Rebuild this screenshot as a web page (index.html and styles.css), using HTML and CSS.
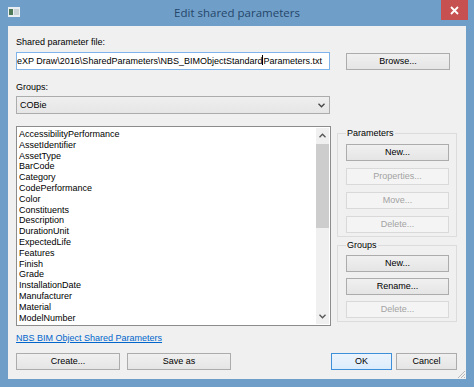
FILE: index.html
```html
<!DOCTYPE html>
<html lang="en">

<head>
    <meta charset="UTF-8">
    <title>Edit shared parameters</title>
    <link rel="stylesheet" href="styles.css">
</head>

<body>
    <div class="window">

        <div class="titlebar">
            <svg class="app_icon" width="12" height="10" viewBox="0 0 12 10">
                <rect x="0" y="0" width="12" height="10" fill="#e8eef2" />
                <rect x="1" y="2" width="4" height="6" fill="#4f7a5a" />
                <rect x="6" y="2" width="5" height="6" fill="#c9d3d8" />
            </svg>
            <div class="title">Edit shared parameters</div>
            <div class="close_btn">
                <svg width="9" height="9" viewBox="0 0 9 9">
                    <path d="M1 1 L8 8 M8 1 L1 8" stroke="#fff" stroke-width="1.8" />
                </svg>
            </div>
        </div>

        <div class="client">
            <div class="label">Shared parameter file:</div>
            <div class="file_row">
                <div class="textbox">
                    <span class="path">ieXP Draw\2016\SharedParameters\NBS_BIMObjectStandard<span class="caret"></span>Parameters.txt</span>
                </div>
                <div class="btn browse">Browse...</div>
            </div>

            <div class="label groups_label">Groups:</div>
            <div class="combo">
                <span>COBie</span>
                <svg width="7" height="5" viewBox="0 0 7 5">
                    <path d="M0.5 0.8 L3.5 3.8 L6.5 0.8" fill="none" stroke="#444" stroke-width="1.3" />
                </svg>
            </div>

            <div class="main">
                <div class="listbox">
                    <div class="items">
                        <div>AccessibilityPerformance</div>
                        <div>AssetIdentifier</div>
                        <div>AssetType</div>
                        <div>BarCode</div>
                        <div>Category</div>
                        <div>CodePerformance</div>
                        <div>Color</div>
                        <div>Constituents</div>
                        <div>Description</div>
                        <div>DurationUnit</div>
                        <div>ExpectedLife</div>
                        <div>Features</div>
                        <div>Finish</div>
                        <div>Grade</div>
                        <div>InstallationDate</div>
                        <div>Manufacturer</div>
                        <div>Material</div>
                        <div>ModelNumber</div>
                    </div>
                    <div class="scrollbar">
                        <svg class="arrow" width="7" height="5" viewBox="0 0 7 5">
                            <path d="M0.5 4.2 L3.5 1.2 L6.5 4.2" fill="none" stroke="#555" stroke-width="1.3" />
                        </svg>
                        <div class="track">
                            <div class="thumb"></div>
                        </div>
                        <svg class="arrow" width="7" height="5" viewBox="0 0 7 5">
                            <path d="M0.5 0.8 L3.5 3.8 L6.5 0.8" fill="none" stroke="#555" stroke-width="1.3" />
                        </svg>
                    </div>
                </div>

                <div class="side">
                    <fieldset class="grp grp_params">
                        <legend>Parameters</legend>
                        <div class="btn">New...</div>
                        <div class="btn disabled">Properties...</div>
                        <div class="btn disabled">Move...</div>
                        <div class="btn disabled">Delete...</div>
                    </fieldset>
                    <fieldset class="grp grp_groups">
                        <legend>Groups</legend>
                        <div class="btn">New...</div>
                        <div class="btn">Rename...</div>
                        <div class="btn disabled">Delete...</div>
                    </fieldset>
                </div>
            </div>

            <a class="link" href="#">NBS BIM Object Shared Parameters</a>

            <div class="footer">
                <div class="btn wide">Create...</div>
                <div class="btn wide">Save as</div>
                <div class="spacer"></div>
                <div class="btn small default">OK</div>
                <div class="btn small">Cancel</div>
            </div>

            <svg class="grip" width="10" height="10" viewBox="0 0 10 10">
                <path d="M9 2 L2 9 M9 5 L5 9 M9 8 L8 9" stroke="#b8b8b8" stroke-width="1" />
            </svg>
        </div>

    </div>
</body>

</html>
```

FILE: styles.css
```css
body {
    margin: 0;
    width: 474px;
    height: 387px;
    overflow: hidden;
    background-color: #6f9fc9;
    font-family: "Liberation Sans", Arial, sans-serif;
    font-size: 9px;
    color: #000;
}

.window {
    display: flex;
    flex-direction: column;
    height: 387px;
}

/* title bar */
.titlebar {
    height: 26px;
    display: grid;
    grid-template-columns: 1fr auto 1fr;
    align-items: start;
}

.app_icon {
    margin: 7px 0 0 8px;
}

.title {
    font-family: "Open Sans", "Liberation Sans", sans-serif;
    font-size: 11.5px;
    line-height: 26px;
    color: #26466a;
}

.close_btn {
    justify-self: end;
    width: 27px;
    height: 20px;
    margin-right: 6px;
    background-color: #c75050;
    display: flex;
    align-items: center;
    justify-content: center;
}

/* client area */
.client {
    position: relative;
    margin: 0 8px;
    height: 353px;
    box-sizing: border-box;
    padding: 10px 9px 0 8px;
    background-color: #f0f0f0;
}

.label {
    height: 12px;
    line-height: 12px;
}

.file_row {
    display: flex;
    align-items: center;
    margin-top: 4px;
}

.textbox {
    width: 314px;
    height: 18px;
    box-sizing: border-box;
    border: 1px solid #7eb4ea;
    background-color: white;
    overflow: hidden;
    white-space: nowrap;
    line-height: 16px;
}

.path {
    margin-left: -2px;
}

.caret {
    display: inline-block;
    width: 1px;
    height: 10px;
    background-color: #000;
    vertical-align: -1px;
}

.browse {
    margin-left: 16px;
    width: 104px;
}

.groups_label {
    margin-top: 11px;
}

.combo {
    margin-top: 3px;
    width: 314px;
    height: 18px;
    box-sizing: border-box;
    border: 1px solid #acacac;
    background: linear-gradient(#efefef, #e6e6e6);
    display: flex;
    align-items: center;
    justify-content: space-between;
    padding: 0 4px 0 3px;
}

/* list + side buttons */
.main {
    display: flex;
    margin-top: 12px;
    height: 200px;
}

.listbox {
    width: 315px;
    height: 200px;
    box-sizing: border-box;
    border: 1px solid #8c8c8c;
    background-color: white;
    display: flex;
}

.items {
    flex: 1;
    padding: 2px 0 0 2px;
    line-height: 10.8px;
    white-space: nowrap;
    overflow: hidden;
}

.scrollbar {
    width: 13px;
    margin: 1px 1px 1px 0;
    background-color: #f0f0f0;
    display: flex;
    flex-direction: column;
    align-items: center;
}

.arrow {
    margin: 5px 0;
}

.track {
    flex: 1;
    width: 100%;
}

.thumb {
    height: 84px;
    margin-top: 1px;
    background-color: #cdcdcd;
}

.side {
    margin-left: 6px;
    width: 120px;
}

.grp {
    margin: 0;
    border: 1px solid #dcdcdc;
    padding: 0 7px 3px 8px;
}

.grp legend {
    padding: 0 1px;
    line-height: 12px;
}

.grp_params {
    margin-top: 1px;
}

.grp_params .btn {
    margin-top: 7px;
}

.grp_params .btn:first-of-type {
    margin-top: 5px;
}

.grp_groups {
    margin-top: 2px;
}

.grp_groups .btn {
    margin-top: 6px;
}

.grp_groups .btn:first-of-type {
    margin-top: 4px;
}

/* buttons */
.btn {
    height: 17px;
    box-sizing: border-box;
    border: 1px solid #acacac;
    background: linear-gradient(#f0f0f0, #e5e5e5);
    text-align: center;
    line-height: 15px;
}

.btn.disabled {
    border-color: #d9d9d9;
    background: #f4f4f4;
    color: #a3a3a3;
}

.link {
    display: block;
    margin-top: 6px;
    height: 12px;
    line-height: 12px;
    color: #0066cc;
    width: max-content;
}

.footer {
    display: flex;
    margin-top: 9px;
}

.wide {
    width: 104px;
    margin-right: 7px;
}

.spacer {
    flex: 1;
}

.small {
    width: 61px;
    margin-left: 4px;
}

.default {
    border-color: #3c8fd8;
    background: linear-gradient(#ecf4fc, #dcecfc);
}

.grip {
    position: absolute;
    right: 0;
    bottom: 0;
}
```
